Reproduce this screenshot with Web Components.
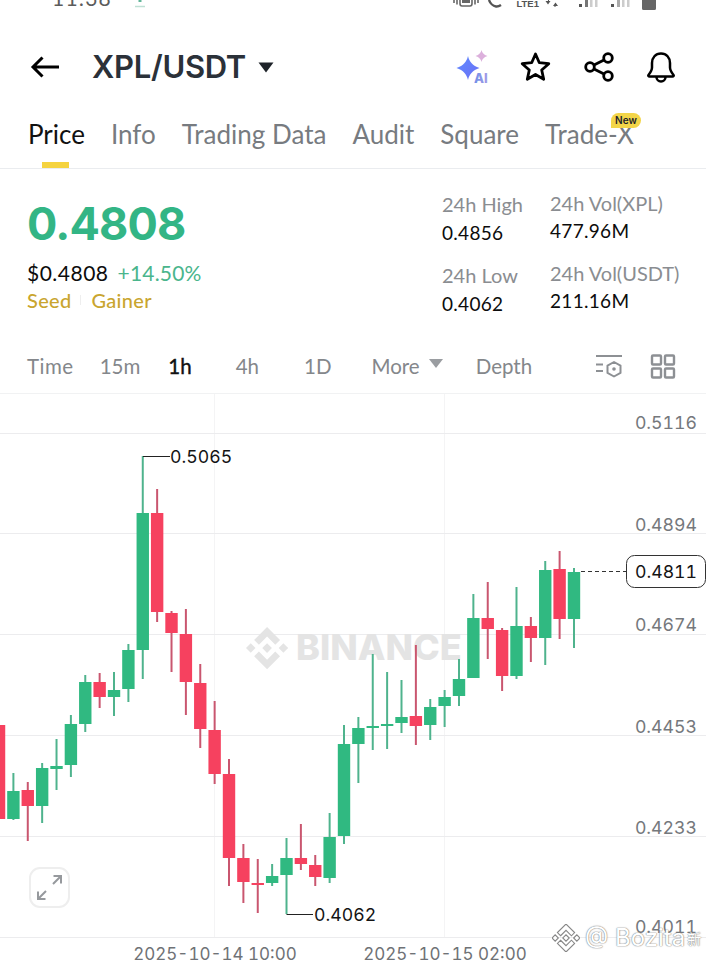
<!DOCTYPE html>
<html lang="en">
<head>
<meta charset="utf-8">
<title>XPL/USDT</title>
<style>
  html, body { margin: 0; padding: 0; background: #fff; }
  body {
    width: 706px;
    height: 965px;
    overflow: hidden;
    display: flex;
    flex-direction: column;
    font-family: Inter, "Liberation Sans", sans-serif;
  }
</style>
</head>
<body>
  <status-bar></status-bar>
  <pair-header pair="XPL/USDT"></pair-header>
  <market-tabs></market-tabs>
  <price-summary>
    <stat-cell slot="left" label="24h High" value="0.4856"></stat-cell>
    <stat-cell slot="left" label="24h Low" value="0.4062"></stat-cell>
    <stat-cell slot="right" label="24h Vol(XPL)" value="477.96M"></stat-cell>
    <stat-cell slot="right" label="24h Vol(USDT)" value="211.16M"></stat-cell>
  </price-summary>
  <interval-bar></interval-bar>
  <candle-chart></candle-chart>

<script>
class StatusBar extends HTMLElement {
  constructor() {
    super();
    this.attachShadow({ mode: "open" }).innerHTML = `
    <style>
      :host { display: flex; height: 10px; overflow: hidden; align-items: flex-end; justify-content: space-between; flex: none; color: #5c5c5c; }
      .left { display: flex; align-items: flex-end; padding-left: 52px; gap: 22px; height: 10px; }
      .time { font: 400 21px/21px Lato, sans-serif; letter-spacing: 1.2px; margin-bottom: 2px; white-space: nowrap; }
      .right { display: flex; align-items: flex-start; padding-right: 50px; height: 10px; }
      .lte { font: 700 9.5px/8px "Liberation Sans", sans-serif; color: #555; margin: 0 6px 0 14px; }
      svg { display: block; flex: none; }
    </style>
    <div class="left">
      <span class="time">11:38</span>
      <svg width="12" height="8" viewBox="0 0 12 8" style="margin-bottom:2px"><path d="M6 0v2" stroke="#63b69a" stroke-width="3"/><path d="M1 6.5h10" stroke="#bfe0d4" stroke-width="1.5"/></svg>
    </div>
    <div class="right">
      <svg width="26" height="7" viewBox="0 0 26 7" fill="none" stroke="#666" stroke-width="1.6"><path d="M7 -3V3.5c0 1.5 .8 2.5 2 2.5h8c1.200 0 2-1 2-2.500V-3"/><path d="M1 -1V3M4 -1V4.500M22 -1V4.500M25 -1V3"/><path d="M9 1h8" stroke-width="4"/></svg>
      <svg width="14" height="8" viewBox="0 0 14 8" fill="none" stroke="#555" stroke-width="2.400" style="margin-left:9px"><path d="M1 0c1 3 4 6 7 6.500 2 .3 3.500-.5 5-1.500"/></svg>
      <span class="lte">LTE1</span>
      <svg width="14" height="7" viewBox="0 0 14 7" fill="#555"><path d="M3 0v1H0.500L3 4.500 5.500 1H4V0zM10.500 7V6H13l-2.500-3.500L8 6h1.500v1z"/></svg>
      <svg width="20" height="7" viewBox="0 0 20 7" style="margin-left:19px"><path d="M1 4h3v3H1z" fill="#555"/><path d="M7 0h3v7H7z" fill="#777"/><path d="M12 0h2.500v7H12zM17 0h2.500v7H17z" fill="#ccc"/></svg>
      <svg width="20" height="7" viewBox="0 0 20 7" style="margin-left:12px"><path d="M1 4h3v3H1z" fill="#555"/><path d="M7 0h3v7H7z" fill="#aaa"/><path d="M12 0h2.500v7H12zM17 0h2.500v7H17z" fill="#ccc"/></svg>
      <svg width="14" height="10" viewBox="0 0 14 10" style="margin-left:12px"><path d="M0 0h14v8.500a1.500 1.500 0 0 1-1.500 1.500h-11A1.500 1.500 0 0 1 0 8.500z" fill="#666"/></svg>
    </div>`;
  }
}

class PairHeader extends HTMLElement {
  constructor() {
    super();
    const pair = this.getAttribute("pair");
    this.attachShadow({ mode: "open" }).innerHTML = `
    <style>
      :host { display: flex; flex: none; height: 94px; box-sizing: border-box; padding: 20px 30px 0 31px; align-items: center; color: #1e2329; }
      .title { font: 600 31px/40px Inter, sans-serif; color: #2b3139; margin-left: 32px; letter-spacing: -.3px; white-space: nowrap; }
      .caret { margin-left: 12px; }
      .icons { margin-left: auto; display: flex; align-items: center; }
      svg { display: block; flex: none; overflow: visible; }
      svg text { font: 800 13px Inter, sans-serif; fill: url(#t); }
    </style>
    <svg width="29" height="22" viewBox="0 0 29 22" fill="none" stroke="#000" stroke-width="3"><path d="M28 11H2.500M11.500 1.500L2 11l9.500 9.500"/></svg>
    <span class="title">${pair}</span>
    <svg class="caret" width="16" height="11" viewBox="0 0 16 11"><path d="M0.500 0.500h15L8 10.500z" fill="#1e2329"/></svg>
    <div class="icons">
      <svg width="34" height="36" viewBox="0 0 34 36">
        <defs>
          <linearGradient id="g" x1="0" y1="0" x2="1" y2="1"><stop offset="0" stop-color="#5f8bff"/><stop offset="1" stop-color="#6c6ff5"/></linearGradient>
          <linearGradient id="t" x1="0" y1="0" x2="1" y2="0"><stop offset="0" stop-color="#6f8fe8"/><stop offset="1" stop-color="#a39be6"/></linearGradient>
        </defs>
        <path d="M12 7c1.500 6 4.500 9.500 11.500 12C16.500 21.500 13.500 25 12 31 10.500 25 7.500 21.500 .5 19 7.500 16.500 10.500 13 12 7z" fill="url(#g)"/>
        <path d="M25.500 1c.7 3 2.200 4.600 6 6-3.800 1.400-5.300 3-6 6-.7-3-2.200-4.600-6-6 3.800-1.400 5.300-3 6-6z" fill="#dcb0dc"/>
        <text x="18" y="34">AI</text>
      </svg>
      <svg style="margin-left:30px" width="31" height="30" viewBox="0 0 30 30" fill="none" stroke="#000" stroke-width="2.800" stroke-linejoin="round"><path d="M15 2L18.800 10.700 28.300 11.700 21.200 18 23.200 27.300 15 22.500 6.800 27.300 8.800 18 1.700 11.700 11.200 10.700Z"/></svg>
      <svg style="margin-left:33px" width="30" height="30" viewBox="0 0 30 30" fill="none" stroke="#000" stroke-width="2.800"><circle cx="24" cy="6" r="4.300"/><circle cx="6" cy="15" r="4.300"/><circle cx="24" cy="24" r="4.300"/><path d="M10 13l10-5M10 17l10 5"/></svg>
      <svg style="margin-left:32px" width="30" height="31" viewBox="0 0 30 31" fill="none" stroke="#000" stroke-width="2.500" stroke-linejoin="round"><path d="M15 1.500C9.500 1.500 6 5.700 6 11v4.500c0 3-1.500 5-3.500 7.500-.6.900 0 1.500 1 1.500h23c1 0 1.600-.6 1-1.500-2-2.500-3.500-4.500-3.500-7.500V11c0-5.300-3.500-9.500-9-9.500z"/><path d="M10.500 25a4.500 4.500 0 0 0 9 0"/></svg>
    </div>`;
  }
}

class MarketTabs extends HTMLElement {
  constructor() {
    super();
    const tabs = ["Price", "Info", "Trading Data", "Audit", "Square", "Trade-X"];
    this.attachShadow({ mode: "open" }).innerHTML = `
    <style>
      :host { display: flex; flex: none; height: 65px; box-sizing: border-box; padding: 14px 0 0 28px; gap: 26px; border-bottom: 1px solid #eaecef; font: 400 26px/32px Lato, sans-serif; color: #777b80; }
      .tab { position: relative; white-space: nowrap; height: 50px; }
      .tab.current { color: #111; }
      .tab.current::after { content: ""; position: absolute; left: 14px; width: 27px; height: 6px; bottom: 0; background: #f5d33f; }
      .badge { position: absolute; right: -7px; top: -5px; height: 15px; padding: 0 4px; border-radius: 8px 8px 8px 0; background: #f3d549; color: #1e2329; font: 600 10px/15px Inter, sans-serif; }
    </style>
    ${tabs.map((t, i) => `<div class="tab${i === 0 ? " current" : ""}">${t}${t === "Trade-X" ? '<span class="badge">New</span>' : ""}</div>`).join("")}`;
  }
}

class StatCell extends HTMLElement {
  constructor() {
    super();
    this.attachShadow({ mode: "open" }).innerHTML = `
    <style>
      :host { display: block; }
      div { white-space: nowrap; line-height: 26px; }
      .label { font: 400 20px/26px Lato, sans-serif; color: #8a8d91; }
      .value { font: 400 19px/26px Lato, sans-serif; color: #0c0c0c; margin-top: var(--value-gap, 2px); letter-spacing: .3px; }
    </style>
    <div class="label">${this.getAttribute("label")}</div>
    <div class="value">${this.getAttribute("value")}</div>`;
  }
}

class PriceSummary extends HTMLElement {
  constructor() {
    super();
    this.attachShadow({ mode: "open" }).innerHTML = `
    <style>
      :host { display: flex; flex: none; height: 172px; box-sizing: border-box; padding-left: 27px; }
      .main { padding-top: 30px; width: 415px; }
      .last { font: 700 45px/50px Inter, sans-serif; color: #33b585; letter-spacing: -.8px; }
      .fiat { display: flex; gap: 9px; margin-top: 11px; font: 400 21px/26px Lato, sans-serif; letter-spacing: .5px; color: #0c0c0c; }
      .fiat b { font-weight: 400; color: #4ab58c; letter-spacing: .2px; }
      .tags { display: flex; align-items: center; margin-top: 2px; font: 500 20px/24px Lato, sans-serif; letter-spacing: .3px; color: #c9a52f; }
      .tags i { width: 1px; height: 10px; background: #eee; margin: 0 10px 0 9px; }
      .col { --value-gap: 3px; display: flex; flex-direction: column; gap: 16px; padding-top: 22px; width: 108px; }
      .col + .col { --value-gap: 2px; padding-top: 21px; }
    </style>
    <div class="main">
      <div class="last">0.4808</div>
      <div class="fiat"><span>$0.4808</span><b>+14.50%</b></div>
      <div class="tags"><span>Seed</span><i></i><span>Gainer</span></div>
    </div>
    <div class="col"><slot name="left"></slot></div>
    <div class="col"><slot name="right"></slot></div>`;
  }
}

class IntervalBar extends HTMLElement {
  constructor() {
    super();
    this.attachShadow({ mode: "open" }).innerHTML = `
    <style>
      :host { display: flex; flex: none; height: 53px; box-sizing: border-box; align-items: center; padding: 0 0 2px 27px; border-bottom: 1px solid #f1f2f3; font: 400 20.500px/28px Lato, sans-serif; color: #84878b; }
      span { white-space: nowrap; }
      span:first-of-type { letter-spacing: .5px; }
      .on { color: #111; -webkit-text-stroke: .4px #111; }
      svg { display: block; flex: none; }
    </style>
    <span>Time</span>
    <span style="margin-left:26px">15m</span>
    <span class="on" style="margin-left:28px">1h</span>
    <span style="margin-left:44px">4h</span>
    <span style="margin-left:45px">1D</span>
    <span style="margin-left:40px">More</span>
    <svg style="margin-left:9px;margin-top:-6px" width="14" height="9" viewBox="0 0 14 9"><path d="M0 0h14L7 9z" fill="#9a9da1"/></svg>
    <span style="margin-left:33px">Depth</span>
    <svg style="margin-left:64px" width="27" height="25" viewBox="0 0 27 25" fill="none" stroke="#8d9094" stroke-width="2"><path d="M0 2h26M0 10.500h7M0 17h7"/><path d="M18 8l6.500 3.600v7.300L18 22.500l-6.500-3.600v-7.300z" stroke-linejoin="round"/><circle cx="18" cy="15" r="1.800" fill="#8d9094" stroke="none"/></svg>
    <svg style="margin-left:27px" width="26" height="25" viewBox="0 0 26 25" fill="none" stroke="#8d9094" stroke-width="2.400"><rect x="2" y="1.500" width="9" height="9" rx="1"/><rect x="15" y="1.500" width="9" height="9" rx="1"/><rect x="2" y="14.500" width="9" height="9" rx="1"/><rect x="15" y="14.500" width="9" height="9" rx="1"/></svg>`;
  }
}

// candle index, up?, body top, body bottom, wick top, wick bottom (page y)
const CANDLES = [
  [-1, 0, 725, 819, 725, 819], [0, 1, 791, 819, 773, 820], [1, 0, 790, 806, 782, 841], [2, 1, 768, 806, 763, 823],
  [3, 1, 766, 769, 739, 790], [4, 1, 724, 765, 715, 777], [5, 1, 682, 724, 675, 732], [6, 0, 682, 697, 673, 708],
  [7, 1, 690, 697, 672, 716], [8, 1, 650, 689, 644, 702], [9, 1, 513, 650, 456, 679], [10, 0, 513, 612, 489, 622],
  [11, 0, 613, 633, 611, 672], [12, 0, 634, 682, 609, 715], [13, 0, 683, 729, 664, 748], [14, 0, 730, 774, 701, 784],
  [15, 0, 774, 858, 759, 886], [16, 0, 858, 882, 844, 903], [17, 0, 883, 885, 859, 913], [18, 1, 876, 883, 864, 886],
  [19, 1, 858, 875, 838, 914], [20, 0, 858, 864, 824, 870], [21, 0, 865, 877, 855, 886], [22, 1, 837, 878, 813, 883],
  [23, 1, 744, 836, 725, 844], [24, 1, 728, 744, 717, 783], [25, 1, 726, 728, 654, 750], [26, 1, 724, 726, 672, 749],
  [27, 1, 717, 723, 680, 733], [28, 0, 716, 726, 645, 745], [29, 1, 707, 725, 699, 740], [30, 1, 697, 706, 690, 727],
  [31, 1, 679, 696, 659, 706], [32, 1, 618, 678, 594, 678], [33, 0, 618, 629, 582, 659], [34, 0, 630, 676, 628, 691],
  [35, 1, 626, 676, 587, 679], [36, 0, 626, 638, 617, 662], [37, 1, 570, 638, 561, 665], [38, 0, 569, 619, 551, 639],
  [39, 1, 572, 619, 568, 648],
];
const GRID_Y = [433, 533, 634, 735, 836, 937];
const PRICES = [["0.5116", 422], ["0.4894", 524], ["0.4674", 624], ["0.4453", 726], ["0.4233", 827], ["0.4011", 926]];

class CandleChart extends HTMLElement {
  constructor() {
    super();
    const cx = (i) => 13.4 + 14.374 * i;
    const candles = CANDLES.map(([i, up, top, bot, wTop, wBot]) => {
      const x = cx(i);
      const wick = up ? "#4fb38d" : "#c9566f";
      const body = up ? "#30b981" : "#f6415f";
      return `<path d="M${x} ${wTop}V${wBot}" stroke="${wick}" stroke-width="2"/>` +
        `<rect x="${x - 6.2}" y="${top}" width="12.4" height="${bot - top}" fill="${body}"/>`;
    }).join("");

    this.attachShadow({ mode: "open" }).innerHTML = `
    <style>
      :host { display: block; position: relative; flex: 1; overflow: hidden; }
      svg.plot { display: block; position: absolute; left: 0; top: 0; }
      text { font-family: Inter, sans-serif; font-variant-numeric: tabular-nums; }
      .axis { font-size: 17.700px; fill: #75787c; text-anchor: end; }
      .time { font-size: 17px; fill: #6f7276; text-anchor: middle; }
      .mark { font-size: 17.700px; fill: #141414; }
      .brand { font: 800 36px Inter, sans-serif; fill: #e4e4e4; }
      .expand { position: absolute; left: 29px; top: 473px; width: 41px; height: 41px; box-sizing: border-box; border: 2px solid #eeeeee; border-radius: 11px; background: #fff; display: flex; align-items: center; justify-content: center; }
      .stamp { position: absolute; left: 552px; top: 530px; display: flex; align-items: center; gap: 5px; color: #fff; font: 400 24px/28px Inter, sans-serif; white-space: nowrap; text-shadow: 0 0 1.500px #777, 0 0 1px #888; }
      .stamp small { font: 400 14px "Noto Sans CJK SC", sans-serif; margin-left: -3px; }
    </style>
    <svg class="plot" width="706" height="571" viewBox="0 394 706 571">
      <g stroke="#f4f4f5" stroke-width="1"><path d="M214.500 394V937M444.500 394V937"/></g>
      <g stroke="#ececee" stroke-width="1">${GRID_Y.map((y) => `<path d="M0 ${y + 0.5}H706"/>`).join("")}</g>
      <g transform="translate(246 627) scale(.333)" fill="#e4e4e4">
        <path d="M38.730 53.200l24.590-24.580 24.600 24.600 14.300-14.310L63.320 0 24.420 38.900l14.310 14.300z"/>
        <path d="M0 63.310l14.300-14.310 14.310 14.310-14.310 14.300z"/>
        <path d="M38.730 73.410l24.590 24.590 24.600-24.600 14.310 14.290-38.900 38.910-38.910-38.880-.02-.02z"/>
        <path d="M98 63.310l14.300-14.310 14.310 14.310-14.300 14.300z"/>
        <path d="M77.830 63.300L63.320 48.780 52.590 59.510l-1.240 1.230-2.540 2.540 14.510 14.500 14.510-14.470z"/>
      </g>
      <text class="brand" x="296" y="660">BINANCE</text>
      ${candles}
      <path d="M143 456.500H170M286.500 914.500H313" stroke="#222" stroke-width="1" fill="none"/>
      <text class="mark" x="170" y="462.500">0.5065</text>
      <text class="mark" x="314" y="921">0.4062</text>
      <path d="M581 571.500H626" stroke="#333" stroke-width="1" stroke-dasharray="4 3"/>
      ${PRICES.map(([p, y]) => `<text class="axis" x="697" y="${y + 6.5}">${p}</text>`).join("")}
      <rect x="626.500" y="555.500" width="79" height="32" rx="8" fill="#fff" stroke="#333"/>
      <text class="mark" x="666" y="578" text-anchor="middle">0.4811</text>
      <text class="time" x="215" y="960">2025-10-14 10:00</text>
      <text class="time" x="445" y="960">2025-10-15 02:00</text>
    </svg>
    <div class="expand">
      <svg width="27" height="27" viewBox="0 0 27 27" fill="none" stroke="#96999d" stroke-width="2"><path d="M2 25L10 17M2 17.500V25h7.500M17 10l8-8M17.500 2H25v7.500"/></svg>
    </div>
    <div class="stamp">
      <svg width="28" height="28" viewBox="0 0 126.610 126.610" fill="#fff" stroke="#888" stroke-width="5">
        <path d="M38.730 53.200l24.590-24.580 24.600 24.600 14.300-14.310L63.320 0 24.420 38.900l14.310 14.300z"/>
        <path d="M0 63.310l14.300-14.310 14.310 14.310-14.310 14.300z"/>
        <path d="M38.730 73.410l24.590 24.590 24.600-24.600 14.310 14.290-38.900 38.910-38.910-38.880-.02-.02z"/>
        <path d="M98 63.310l14.300-14.310 14.310 14.310-14.300 14.300z"/>
        <path d="M77.830 63.300L63.320 48.780 52.590 59.510l-1.240 1.230-2.540 2.540 14.510 14.500 14.510-14.470z"/>
      </svg>
      <span>@ Bozita</span><small>新</small>
    </div>`;
  }
}

customElements.define("status-bar", StatusBar);
customElements.define("pair-header", PairHeader);
customElements.define("market-tabs", MarketTabs);
customElements.define("stat-cell", StatCell);
customElements.define("price-summary", PriceSummary);
customElements.define("interval-bar", IntervalBar);
customElements.define("candle-chart", CandleChart);
</script>
</body>
</html>
